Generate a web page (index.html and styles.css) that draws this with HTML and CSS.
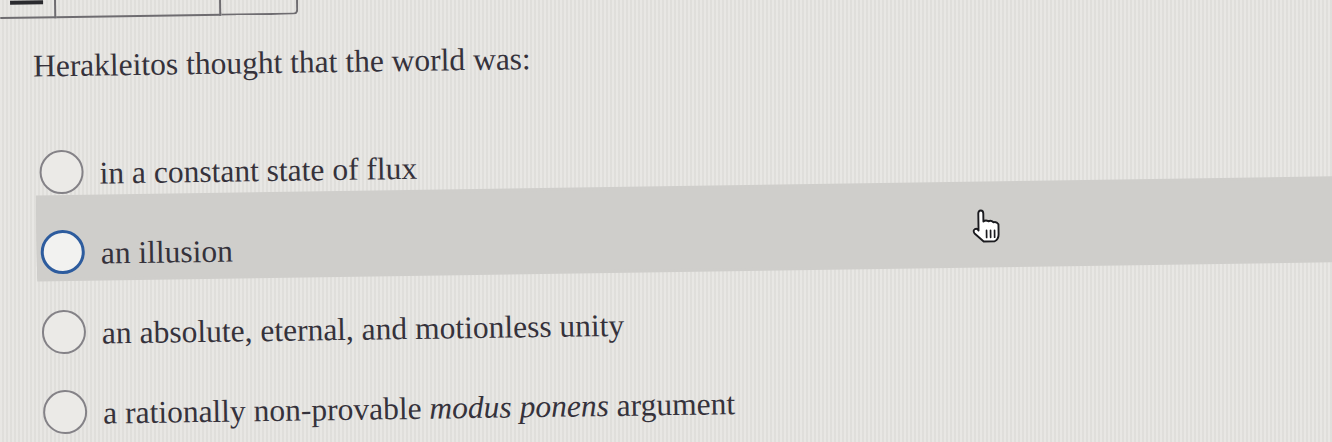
FILE: index.html
```html
<!DOCTYPE html>
<html>
<head>
<meta charset="utf-8">
<link rel="stylesheet" href="styles.css">
</head>
<body>
<div class="page">
  <div class="tabs">
    <div class="tab tab-a"><span class="tab-mark"></span></div>
    <div class="tab tab-b"></div>
    <div class="tab tab-c"></div>
  </div>
  <p class="question">Herakleitos thought that the world was:</p>
  <ul class="options">
    <li class="option"><span class="radio"></span><span class="label">in a constant state of flux</span></li>
    <li class="option option-hover"><span class="radio radio-focus"></span><span class="label">an illusion</span>
      <svg class="cursor" width="32" height="36" viewBox="0 0 32 36">
        <path d="M8 5Q8 2 10.5 2Q13 2 13 5V13Q15.5 11 18 13Q20.5 11.5 23 14Q26 13 28 16V26Q28 31 24 33H13L4 25Q2 22 4.5 20.5Q6.5 19.5 8 22Z" fill="#fff" stroke="#1b1b1f" stroke-width="1.9" stroke-linejoin="round"/>
        <path d="M16 22v7M20 22v7M24 22v7" stroke="#1b1b1f" stroke-width="1.7" stroke-linecap="round"/>
      </svg>
    </li>
    <li class="option"><span class="radio"></span><span class="label">an absolute, eternal, and motionless unity</span></li>
    <li class="option"><span class="radio"></span><span class="label">a rationally non-provable <em>modus ponens</em> argument</span></li>
  </ul>
</div>
</body>
</html>
```
FILE: styles.css
```css
html, body {
  margin: 0;
  padding: 0;
  width: 1332px;
  height: 442px;
  overflow: hidden;
  background: #e3e2de;
}
body {
  background-image: repeating-linear-gradient(90deg, rgba(255,255,255,0.18) 0 2px, rgba(0,0,0,0.015) 2px 4px);
  font-family: "Liberation Serif", "Times New Roman", serif;
  color: #35323b;
}
.page {
  width: 1420px;
  transform: rotate(-0.85deg);
  transform-origin: 0 0;
  margin-top: 5px;
}
.tabs {
  display: flex;
  height: 10px;
  margin-top: -6px;
  margin-bottom: -4px;
}
.tab {
  height: 20px;
  border-bottom: 2px solid #6e6c70;
  border-right: 2px solid #6e6c70;
  box-sizing: border-box;
  position: relative;
}
.tab-a { width: 56px; }
.tab-b { width: 165px; }
.tab-c { width: 77px; border-bottom-right-radius: 5px; }
.tab-mark {
  position: absolute;
  left: 10px;
  bottom: 12px;
  width: 33px;
  height: 4px;
  background: #2a2a2e;
}
.question {
  margin: 44px 0 0 32px;
  font-size: 31.5px;
  line-height: 36px;
}
.options {
  list-style: none;
  margin: 0;
  padding: 0;
  margin-top: 34px;
  margin-left: 33px;
}
.option {
  display: flex;
  align-items: center;
  height: 80px;
  box-sizing: border-box;
  padding-top: 28px;
  padding-left: 4px;
  position: relative;
}
.option-hover {
  background: #cfcecb;
  box-shadow: 0 -3px 0 #cfcecb, 0 3px 0 #cfcecb;
}
.radio {
  width: 44px;
  height: 44px;
  box-sizing: border-box;
  border: 2px solid #848287;
  border-radius: 50%;
  background: #ebeae7;
  flex: none;
}
.radio-focus {
  border: 3px solid #2d5c9e;
  background: #f2f2f0;
}
.label {
  margin-left: 16px;
  font-size: 31.5px;
  position: relative;
  top: 2px;
}
.label em { font-style: italic; }
.cursor {
  position: absolute;
  left: 934px;
  top: 24px;
}
```
